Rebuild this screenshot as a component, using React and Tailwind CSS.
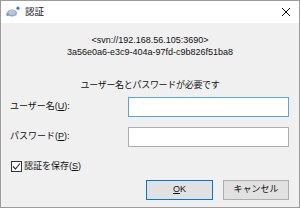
import React from "react";

const font = "font-['Liberation_Sans','Noto_Sans_CJK_JP',sans-serif]";

function TurtleIcon() {
  return (
    <svg width="14" height="12" viewBox="0 0 14 12">
      <ellipse cx="6" cy="7" rx="5" ry="3.6" fill="#8fa6c4" />
      <ellipse cx="6" cy="6.4" rx="3.6" ry="2.6" fill="#b4c6de" />
      <circle cx="1.6" cy="8.6" r="1.4" fill="#7b93b5" />
      <circle cx="12" cy="2.2" r="1.6" fill="#2a7fd4" />
    </svg>
  );
}

function CloseIcon() {
  return (
    <svg width="10" height="10" viewBox="0 0 10 10">
      <path d="M1 1 L9 9 M9 1 L1 9" stroke="#111" strokeWidth="1" />
    </svg>
  );
}

function Check() {
  return (
    <div className="w-[11px] h-[11px] border border-[#333] bg-white flex items-center justify-center">
      <svg width="9" height="9" viewBox="0 0 9 9">
        <path d="M1 4.5 L3.5 7 L8 1.5" stroke="#222" strokeWidth="1.1" fill="none" />
      </svg>
    </div>
  );
}

export default function App() {
  return (
    <div className={`w-[300px] h-[208px] border border-[#9b9b9b] flex flex-col text-[9px] text-[#111] ${font}`}>
      <div className="h-[22px] bg-white flex items-center pl-[5px] pr-[8px] shrink-0">
        <TurtleIcon />
        <span className="ml-[5px] text-[9.5px]">認証</span>
        <div className="ml-auto">
          <CloseIcon />
        </div>
      </div>
      <div className="flex-1 bg-[#f0f0f0] flex flex-col pt-[11px] px-[9px]">
        <div className="text-center leading-[12px]">&lt;svn://192.168.56.105:3690&gt;</div>
        <div className="text-center leading-[12px]">3a56e0a6-e3c9-404a-97fd-c9b826f51ba8</div>
        <div className="text-center leading-[12px] mt-[21px] tracking-[-0.3px]">ユーザー名とパスワードが必要です</div>
        <div className="flex items-center mt-[6px]">
          <span className="w-[118px]">ユーザー名(<span className="underline">U</span>):</span>
          <div className="w-[161px] h-[20px] border border-[#5aa2e6] bg-white" />
        </div>
        <div className="flex items-center mt-[10px]">
          <span className="w-[118px]">パスワード(<span className="underline">P</span>):</span>
          <div className="w-[161px] h-[20px] border border-[#adadad] bg-white" />
        </div>
        <div className="flex items-center gap-[2px] mt-[13px] pl-[1px]">
          <Check />
          <span>認証を保存(<span className="underline">S</span>)</span>
        </div>
        <div className="flex justify-end gap-[10px] mt-[6px] pr-[1px]">
          <div className="w-[67px] h-[20px] bg-[#e1e1e1] border border-[#0078d7] flex items-center justify-center">
            <span><span className="underline">O</span>K</span>
          </div>
          <div className="w-[66px] h-[20px] bg-[#e1e1e1] border border-[#adadad] flex items-center justify-center">
            キャンセル
          </div>
        </div>
      </div>
    </div>
  );
}
